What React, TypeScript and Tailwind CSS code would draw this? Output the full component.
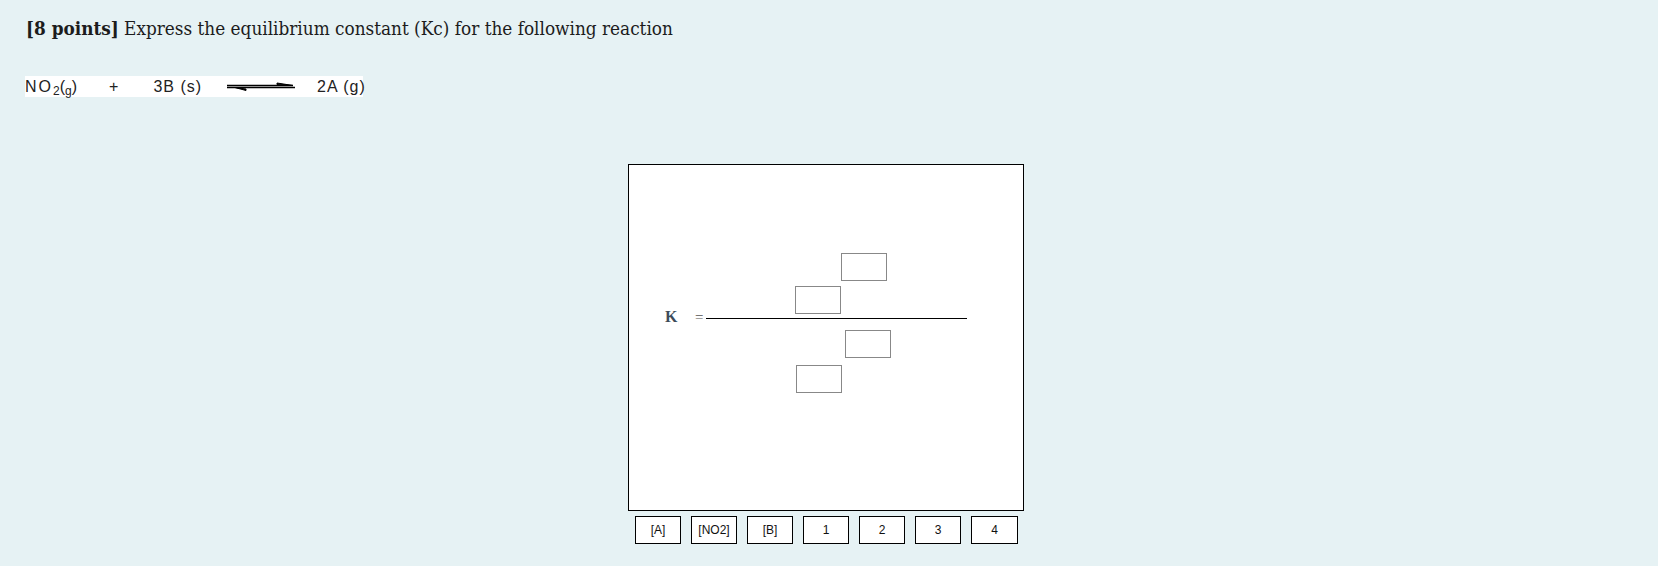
import React from "react";

const DropBox = ({ left, top }: { left: number; top: number }) => (
  <div
    className="absolute w-[46px] h-[28px] border border-[#888888] bg-white"
    style={{ left, top }}
  />
);

const Arrow = () => (
  <svg width="70" height="12" viewBox="0 0 70 12" className="block">
    <line x1="0" y1="4.5" x2="66" y2="4.5" stroke="#000" strokeWidth="1.6" />
    <line x1="0" y1="6.5" x2="68" y2="6.5" stroke="#000" strokeWidth="1.6" />
    <path d="M50 2 L66 4.5 L50 3.6 Z" fill="#000" stroke="#000" strokeWidth="1" />
    <path d="M8 6.5 L19 9.5 L19 8 Z" fill="#000" stroke="#000" strokeWidth="1" />
  </svg>
);

export default function App() {
  const buttons = ["[A]", "[NO2]", "[B]", "1", "2", "3", "4"];
  return (
    <div className="w-[1658px] h-[566px] bg-[#e6f2f4] overflow-hidden">
      <div className="pt-[15px] pl-[26px] text-[18.8px] leading-[26px] whitespace-nowrap text-[#1c1c1c] font-['DejaVu_Serif',serif] font-stretch-condensed">
        <span className="font-bold">[8 points]</span> Express the equilibrium constant (Kc) for the following reaction
      </div>

      <div className="mt-[34px] ml-[25px] w-[338px] h-[21px] bg-white flex items-center whitespace-nowrap font-['Liberation_Sans',Arial,sans-serif] text-[16px] text-[#222]">
        <span className="flex items-baseline shrink-0">
          <span className="tracking-[2px]">NO</span>
          <span className="text-[12px] relative top-[3px]">2</span>
          <span>(</span>
          <span className="text-[12px] relative top-[3px]">g</span>
          <span>)</span>
        </span>
        <span className="ml-[32px] shrink-0">+</span>
        <span className="ml-[35px] tracking-[1px] shrink-0">3B (s)</span>
        <span className="ml-[25px] shrink-0">
          <Arrow />
        </span>
        <span className="ml-[20px] tracking-[1px] shrink-0">2A (g)</span>
      </div>

      <div className="ml-[628px] mt-[67px] w-[396px]">
        <div className="relative w-[396px] h-[347px] border border-black bg-white">
          <span className="absolute left-[36px] top-[142px] font-['Liberation_Serif',serif] font-bold text-[16px] leading-[20px] text-[#3d4b5a]">
            K
          </span>
          <span className="absolute left-[66px] top-[143px] font-['Liberation_Serif',serif] text-[15px] leading-[18px] text-[#555]">
            =
          </span>
          <div className="absolute left-[77px] top-[153px] w-[261px] h-[1px] bg-black" />
          <DropBox left={212} top={88} />
          <DropBox left={166} top={121} />
          <DropBox left={216} top={165} />
          <DropBox left={167} top={200} />
        </div>
        <div className="mt-[5px] ml-[7px] flex gap-[10px]">
          {buttons.map((b, i) => (
            <div
              key={b}
              className={`${i === 6 ? "w-[47px]" : "w-[46px]"} h-[28px] border border-black bg-white flex items-center justify-center font-['Liberation_Sans',Arial,sans-serif] text-[12px] text-[#111]`}
            >
              {b}
            </div>
          ))}
        </div>
      </div>
    </div>
  );
}
